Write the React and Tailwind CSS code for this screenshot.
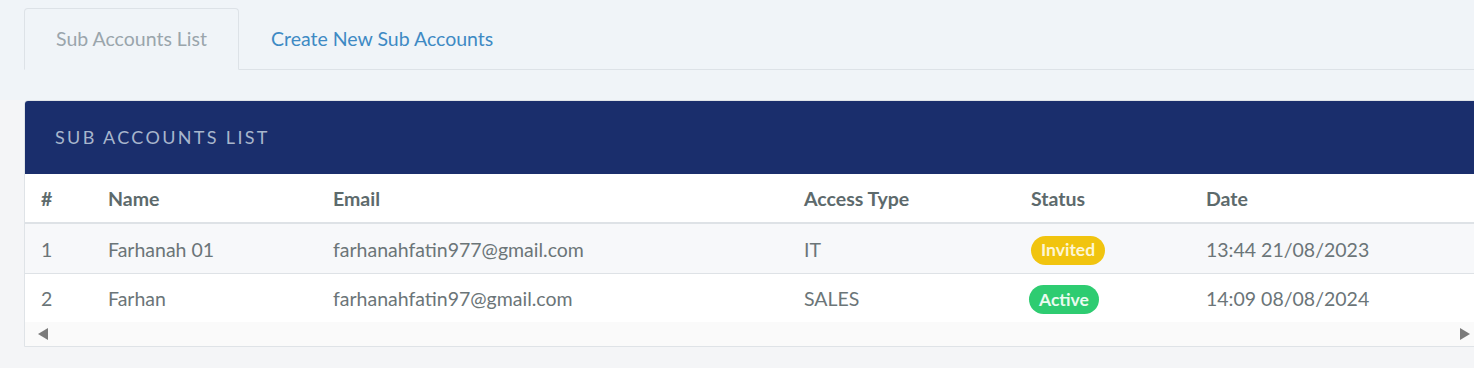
export default function App() {
  const rows = [
    { n: 1, name: "Farhanah 01", email: "farhanahfatin977@gmail.com", type: "IT", status: "Invited", date: "13:44 21/08/2023" },
    { n: 2, name: "Farhan", email: "farhanahfatin97@gmail.com", type: "SALES", status: "Active", date: "14:09 08/08/2024" },
  ];
  return (
    <div className="w-[1474px] h-[368px] overflow-hidden bg-[#f4f5f7] text-[19.5px]" style={{ fontFamily: "Lato, 'Noto Sans', sans-serif" }}>
      <div className="bg-[#f0f4f8] pt-[8px] pl-[24px]">
        <div className="flex border-b border-[#dde2e7] h-[62px]">
          <div className="w-[215px] h-[62px] -mb-px border border-[#dde2e7] border-b-[#f0f4f8] rounded-t-[4px] flex items-center justify-center text-[#9aa5ac]">
            Sub Accounts List
          </div>
          <div className="h-[61px] pl-[32px] flex items-center text-[#3e8ac4]">Create New Sub Accounts</div>
        </div>
        <div className="h-[30px]" />
      </div>
      <div className="pl-[24px]">
        <div className="w-[1500px] border border-[#dfe3e7] rounded-tl-[4px] overflow-hidden bg-white">
          <div className="h-[73px] bg-[#1a2e6c] flex items-center pl-[30px] text-[#a8b6cc] text-[18px] tracking-[0.13em]">
            SUB ACCOUNTS LIST
          </div>
          <div className="w-[1450px]">
            <div className="flex h-[50px] pt-[2px] items-center font-bold text-[#5d6a6c] border-b-2 border-[#dee2e6]">
              <div className="w-[83px] pl-[16px]">#</div>
              <div className="w-[225px]">Name</div>
              <div className="w-[471px]">Email</div>
              <div className="w-[227px]">Access Type</div>
              <div className="w-[175px]">Status</div>
              <div>Date</div>
            </div>
            {rows.map((r, i) => (
              <div key={r.n} className={`flex items-center pt-[2px] text-[#6b7578] ${i === 0 ? "bg-[#f7f8fa] border-b border-[#dee2e6] h-[50px]" : "bg-white h-[48px]"}`}>
                <div className="w-[83px] pl-[16px]">{r.n}</div>
                <div className="w-[225px]">{r.name}</div>
                <div className="w-[471px]">{r.email}</div>
                <div className="w-[227px]">{r.type}</div>
                <div className="w-[175px]">
                  {r.status === "Invited" ? (
                    <span className="inline-flex items-center h-[29px] px-[10px] rounded-full bg-[#f1c40f] text-[#fdf6d6] font-bold text-[17.5px]">Invited</span>
                  ) : (
                    <span className="inline-flex items-center h-[29px] px-[10px] rounded-full bg-[#2ecc71] text-[#eafbf0] font-bold text-[17.5px] -ml-[2px]">Active</span>
                  )}
                </div>
                <div>{r.date}</div>
              </div>
            ))}
          </div>
          <div className="h-[24px] bg-[#fafafa] flex items-center justify-between w-[1449px] pl-[13px] pr-[4px]">
            <div className="w-0 h-0 border-y-[6px] border-y-transparent border-r-[10px] border-r-[#7b7b7b]" />
            <div className="w-0 h-0 border-y-[6px] border-y-transparent border-l-[10px] border-l-[#7b7b7b]" />
          </div>
        </div>
      </div>
    </div>
  );
}
